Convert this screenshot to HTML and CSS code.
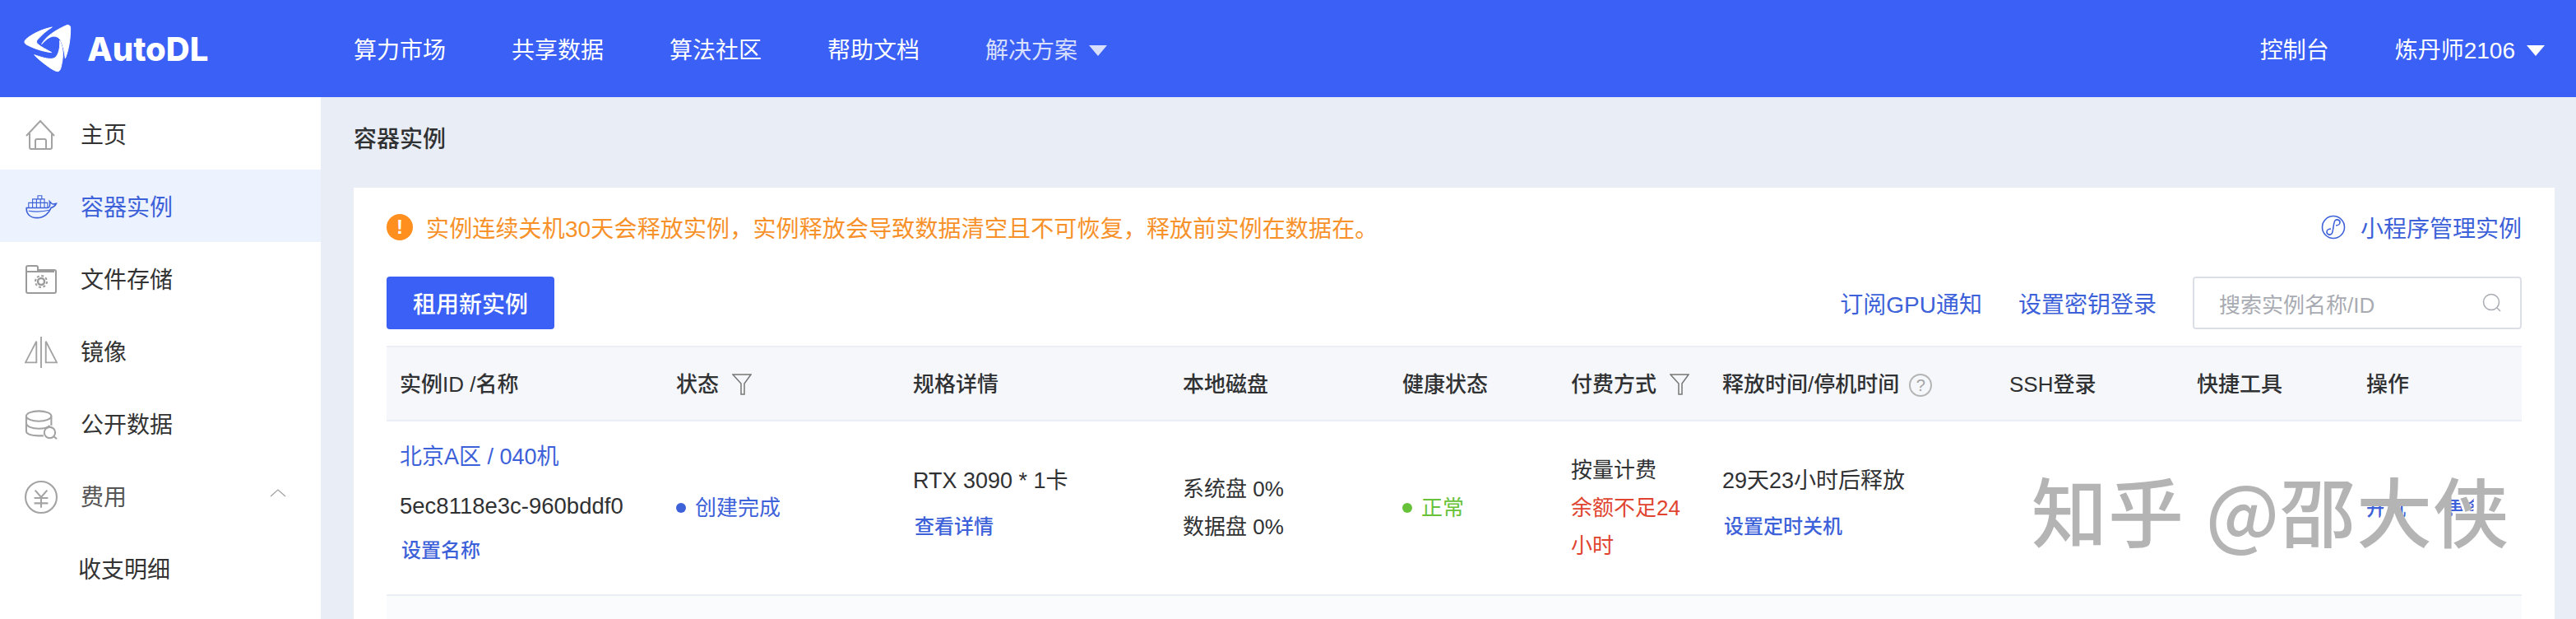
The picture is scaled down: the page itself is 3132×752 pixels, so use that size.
FILE: index.html
```html
<!DOCTYPE html>
<html>
<head>
  <title>AutoDL</title>
  <link rel="stylesheet" href="styles.css">
</head>
<body>
  <header class="topbar">
    <div class="logo">
      <svg class="logo-mark" viewBox="0 0 240 228" fill="#fff" stroke="#fff" stroke-width="3">
        <path d="M130 36 C100 42 60 58 35 80 C28 87 28 94 36 99 C60 112 95 125 128 128 C110 118 90 108 78 98 C72 92 72 86 78 80 C90 66 110 48 130 36Z"/>
        <path d="M92 98 C105 72 140 48 183 29 C192 26 197 31 197 40 C197 75 192 115 178 150 C175 125 170 100 160 82 C150 68 135 66 120 74 C108 80 100 90 92 98Z"/>
        <path d="M65 137 C85 143 115 155 135 150 C150 145 160 120 158 85 C170 110 172 140 165 170 C162 185 160 195 152 197 C145 198 135 192 125 186 C105 172 82 155 65 137Z"/>
      </svg>
      <span class="logo-text">AutoDL</span>
    </div>
    <nav class="nav">
      <a>算力市场</a>
      <a>共享数据</a>
      <a>算法社区</a>
      <a>帮助文档</a>
      <a class="dim">解决方案<i class="caret"></i></a>
    </nav>
    <div class="user">
      <a>控制台</a>
      <a class="user-name">炼丹师2106<i class="caret"></i></a>
    </div>
  </header>

  <div class="layout">
    <aside class="sidebar">
      <a class="side-item">
        <svg class="side-icon" viewBox="0 0 40 40" fill="none" stroke="#a3a3a3" stroke-width="2"><path d="M2 21 L19 3 L36 21 M6 18 V35 Q6 37 8 37 H31 Q33 37 33 35 V18 M13 37 V27 Q13 25 15 25 H24 Q26 25 26 27 V37"/></svg>
        主页
      </a>
      <a class="side-item active">
        <svg class="side-icon" viewBox="25 22 125 125" fill="none" stroke="#3d61d9" stroke-width="5"><path d="M32 86 H112 C120 86 122 78 120 62 C124 66 128 72 132 72 L145 70 C140 80 132 84 125 86 C118 105 100 124 72 124 C45 124 30 108 32 86Z"/><path stroke-width="3.5" d="M75 40 H90 V53 H75Z M55 53 H100 V67 H55Z M70 53 V67 M85 53 V67 M40 67 H112 V86 H40Z M55 67 V86 M70 67 V86 M85 67 V86 M100 67 V86 M40 98 C65 102 100 100 122 94"/></svg>
        容器实例
      </a>
      <a class="side-item">
        <svg class="side-icon" viewBox="0 0 40 36" fill="none" stroke="#9b9b9b" stroke-width="2"><path d="M2 8 V3 Q2 1 4 1 H14 Q16 1 16 3 V6 H36 Q38 6 38 8 V32 Q38 34 36 34 H4 Q2 34 2 32 V8 H36"/><circle cx="20" cy="20" r="4" stroke-width="2.5"/><circle cx="20" cy="20" r="7" stroke-width="2" stroke-dasharray="3 2.5"/></svg>
        文件存储
      </a>
      <a class="side-item">
        <svg class="side-icon" viewBox="0 0 42 40" fill="none" stroke="#a3a3a3" stroke-width="2"><path d="M21 0 V40"/><path d="M15 6 V33 H1Z M27 6 V33 H41Z"/></svg>
        镜像
      </a>
      <a class="side-item">
        <svg class="side-icon" viewBox="0 0 42 38" fill="none" stroke="#a3a3a3" stroke-width="2.2"><ellipse cx="18" cy="8" rx="16" ry="6.5"/><path d="M2 8 V27 C2 31 9 33 18 33 H24 M2 17 C2 21 9 24 18 24 C24 24 29 23 32 20 M34 8 V20"/><circle cx="32" cy="29" r="7"/><path d="M37 34 L41 37"/></svg>
        公开数据
      </a>
      <a class="side-item muted">
        <svg class="side-icon" viewBox="0 0 38 38" fill="none" stroke="#a3a3a3" stroke-width="2"><circle cx="19" cy="19" r="18"/><path d="M12 11 L19 19 L26 11 M11 20 H27 M11 26 H27 M19 19 V31"/></svg>
        费用
        <svg class="chevron" viewBox="0 0 20 12" fill="none" stroke="#a3a3a3" stroke-width="1.3"><path d="M1 10 L10 2 L19 10"/></svg>
      </a>
      <a class="side-item sub">收支明细</a>
    </aside>

    <main class="main">
      <h2 class="page-title">容器实例</h2>
      <section class="card">
        <div class="notice">
          <span class="notice-text"><i class="warn-icon">!</i>实例连续关机30天会释放实例，实例释放会导致数据清空且不可恢复，释放前实例在数据在。</span>
          <a class="mini-link">
            <svg class="mini-icon" viewBox="0 0 30 30" fill="none" stroke="#3d61d9" stroke-width="1.6"><circle cx="15" cy="15" r="13.5"/><path d="M18 13 C21 13 23 11 23 9 C23 6 19 5 17 7 C15 9 15 21 13 23 C11 25 7 24 7 21 C7 18 10 17 12 17"/></svg>
            小程序管理实例
          </a>
        </div>
        <div class="toolbar">
          <button class="btn-primary">租用新实例</button>
          <div class="tools">
            <a class="tool-link">订阅GPU通知</a>
            <a class="tool-link">设置密钥登录</a>
            <div class="search">
              <span class="placeholder">搜索实例名称/ID</span>
              <svg class="search-icon" viewBox="0 0 24 24" fill="none" stroke="#a8abb2" stroke-width="1.5"><circle cx="11" cy="11" r="9.5"/><path d="M18 18 L22 22"/></svg>
            </div>
          </div>
        </div>

        <table class="instances">
          <colgroup>
            <col class="c-id"><col class="c-status"><col class="c-spec"><col class="c-disk"><col class="c-health">
            <col class="c-fee"><col class="c-release"><col class="c-ssh"><col class="c-tools"><col class="c-ops">
          </colgroup>
          <thead>
            <tr>
              <th>实例ID /名称</th>
              <th>状态<svg class="filter" viewBox="0 0 24 26" fill="none" stroke="#777" stroke-width="1.5"><path d="M1 1 H23 L15 12 V25 H11 V12Z"/></svg></th>
              <th>规格详情</th>
              <th>本地磁盘</th>
              <th>健康状态</th>
              <th>付费方式<svg class="filter" viewBox="0 0 24 26" fill="none" stroke="#777" stroke-width="1.5"><path d="M1 1 H23 L15 12 V25 H11 V12Z"/></svg></th>
              <th>释放时间/停机时间<i class="help">?</i></th>
              <th>SSH登录</th>
              <th>快捷工具</th>
              <th>操作</th>
            </tr>
          </thead>
          <tbody>
            <tr>
              <td>
                <div class="id-area">北京A区 / 040机</div>
                <div class="id-code">5ec8118e3c-960bddf0</div>
                <a class="small-link id-set">设置名称</a>
              </td>
              <td><span class="state blue">创建完成</span></td>
              <td class="raised">
                <div class="spec-line">RTX 3090 * 1卡</div>
                <a class="small-link">查看详情</a>
              </td>
              <td class="lines">系统盘 0%<br>数据盘 0%</td>
              <td><span class="state green">正常</span></td>
              <td class="lines">按量计费<div class="red">余额不足24小时</div></td>
              <td class="raised">
                <div class="spec-line">29天23小时后释放</div>
                <a class="small-link">设置定时关机</a>
              </td>
              <td></td>
              <td></td>
              <td class="ops"><a class="small-link">开机</a><a class="small-link">更多</a></td>
            </tr>
            <tr class="next-row"><td colspan="10"></td></tr>
          </tbody>
        </table>
      </section>
      <div class="watermark">知乎 @邵大侠</div>
    </main>
  </div>
</body>
</html>
```

FILE: styles.css
```css
* { box-sizing: border-box; }
html, body { height: 752px; overflow: hidden; }
body { margin: 0; font-family: "Liberation Sans", "Noto Sans CJK SC", sans-serif; font-size: 26px; color: #303133; background-color: #e9edf5; }
a { color: inherit; text-decoration: none; }
i { font-style: normal; }

.topbar { display: flex; align-items: center; height: 118px; background-color: #3a60f5; color: #fff; font-size: 28px; padding-right: 38px; }
.logo { display: flex; align-items: center; width: 430px; padding-left: 20px; }
.logo-mark { width: 80px; height: 76px; }
.logo-text { margin-left: 6px; font-family: Inter, sans-serif; font-weight: 800; font-size: 40px; }
.nav { display: flex; gap: 80px; }
.dim { opacity: 0.8; }
.caret { display: inline-block; margin-left: 14px; vertical-align: 3px; border-left: 11px solid transparent; border-right: 11px solid transparent; border-top: 13px solid #fff; }
.user { display: flex; gap: 80px; margin-left: auto; }

.layout { display: flex; position: relative; height: 634px; }
.sidebar { width: 390px; background: white; font-size: 28px; color: #333; }
.side-item { display: flex; align-items: center; height: 88px; padding: 6px 0 0 30px; line-height: 32px; }
.side-item.active { background-color: #ecf3fe; color: #3d61d9; }
.side-item.muted { color: #555; }
.side-item.sub { padding-left: 95px; }
.side-icon { width: 40px; height: 40px; margin-right: 28px; margin-bottom: 2px; flex-shrink: 0; }
.chevron { width: 20px; height: 12px; margin-left: auto; margin-right: 42px; margin-bottom: 12px; }

.main { flex: 1; padding: 0 26px 0 40px; }
.page-title { margin: 0; height: 110px; line-height: 104px; font-size: 28px; font-weight: 500; color: #303133; }
.card { background: white; padding: 32px 40px 0; height: 524px; }
.notice { display: flex; align-items: center; justify-content: space-between; height: 32px; font-size: 28px; }
.notice-text { display: flex; align-items: center; color: #f7912a; letter-spacing: 0.15px; }
.warn-icon { width: 32px; height: 32px; margin-right: 16px; border-radius: 50%; background-color: #ff8f1f; color: white; font: bold 24px/32px "Liberation Sans", sans-serif; text-align: center; }
.mini-link { display: flex; align-items: center; color: #3d61d9; }
.mini-icon { width: 30px; height: 30px; margin-right: 18px; }

.toolbar { display: flex; justify-content: space-between; margin-top: 44px; height: 64px; }
.btn-primary { width: 204px; height: 64px; border: none; border-radius: 4px; background-color: #3a60f5; color: white; font-family: inherit; font-size: 28px; font-weight: 500; }
.tools { display: flex; align-items: center; }
.tool-link { margin-right: 44px; font-size: 28px; color: #3d61d9; }
.search { display: flex; align-items: center; justify-content: space-between; width: 400px; height: 64px; padding: 0 22px 0 30px; border: 2px solid #dcdfe6; border-radius: 4px; }
.placeholder { color: #a8abb2; }
.search-icon { width: 24px; height: 24px; }

.instances { width: 2596px; margin-top: 20px; border-collapse: collapse; table-layout: fixed; }
.c-id { width: 336px; }
.c-status { width: 288px; }
.c-spec { width: 328px; }
.c-disk { width: 267px; }
.c-health { width: 205px; }
.c-fee { width: 184px; }
.c-release { width: 349px; }
.c-ssh { width: 228px; }
.c-tools { width: 206px; }
.c-ops { width: 205px; }
.instances th { height: 90px; padding: 0 16px 3px; background-color: #f5f7fb; border-top: 2px solid #ebeef5; border-bottom: 2px solid #ebeef5; text-align: left; font-weight: 500; color: #303133; white-space: nowrap; }
.instances td { height: 212px; padding: 0 16px; border-bottom: 2px solid #ebeef5; vertical-align: middle; line-height: 46px; }
.instances td.raised { padding-bottom: 11px; }
.filter { width: 24px; height: 26px; margin-left: 16px; vertical-align: -4px; }
.help { display: inline-block; width: 28px; height: 28px; margin-left: 12px; border: 2px solid #b5b5b5; border-radius: 50%; color: #a3a3a3; font-size: 20px; line-height: 24px; text-align: center; font-weight: 400; vertical-align: 1px; }

.id-area { color: #3d61d9; font-size: 27px; line-height: 60px; }
.id-code { font-size: 27.5px; line-height: 60px; }
.small-link { color: #3d61d9; font-size: 24px; font-weight: 500; }
.id-set { display: block; line-height: 48px; padding-bottom: 16px; }
.spec-line { font-size: 27px; line-height: 55px; }
td > .small-link { display: block; padding-left: 2px; line-height: 55px; }
td > .id-set { line-height: 48px; }
.state { display: flex; align-items: center; }
.state::before { content: ""; width: 12px; height: 12px; margin-right: 11px; border-radius: 50%; background-color: currentColor; }
.blue { color: #3d61d9; }
.green { color: #67c23a; }
.red { color: #e0442f; }
td.ops { font-size: 24px; white-space: nowrap; }
td.ops > .small-link { display: inline; padding-left: 0; margin-right: 48px; }
.next-row td { height: 40px; background-color: #fafbfd; border: none; }

/* sits on top of the table, white edge cuts into whatever is below */
.watermark { position: absolute; left: 2470px; top: 445px; font-family: "Noto Sans CJK SC", sans-serif; font-size: 92px; font-weight: 500; line-height: 110px; letter-spacing: 1px; word-spacing: 4px; white-space: nowrap; color: #b4b4b4; text-shadow: -4px -3px 0 #fff; }
```
